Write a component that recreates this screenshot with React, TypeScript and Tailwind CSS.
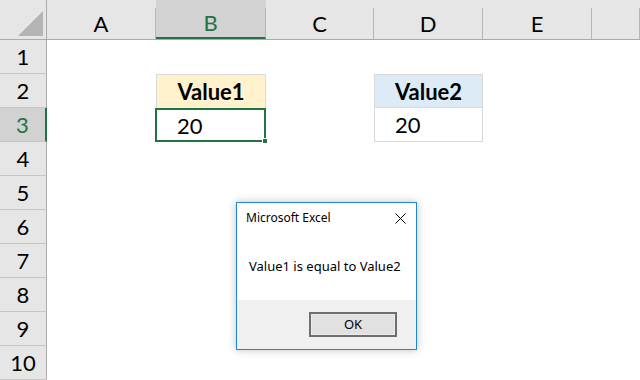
import { Fragment } from 'react';

const COLS = ['A', 'B', 'C', 'D', 'E', ''];
const ROWS = [1, 2, 3, 4, 5, 6, 7, 8, 9, 10];

function ColHeader({ label, selected }: { label: string; selected?: boolean }) {
  return (
    <div className={`flex pt-2 ${selected ? 'bg-[#d2d2d2]' : 'bg-[#e6e6e6]'} border-b border-[#ababab]`}>
      <div
        className={`flex h-full w-full items-center justify-center border-r border-[#b6b6b6] text-[22px] ${
          selected ? 'text-[#217346] border-b-2 border-b-[#217346]' : 'text-black'
        }`}
      >
        {label}
      </div>
    </div>
  );
}

function RowHeader({ n, selected }: { n: number; selected?: boolean }) {
  return (
    <div
      className={`flex items-center justify-center border-b border-[#c6c6c6] text-[22px] ${
        selected
          ? 'bg-[#d2d2d2] text-[#217346] border-r-2 border-r-[#217346]'
          : 'bg-[#e6e6e6] text-black border-r border-r-[#ababab]'
      }`}
    >
      {n}
    </div>
  );
}

function Cell({ row, col }: { row: number; col: number }) {
  if (row === 2 && col === 1) {
    return (
      <div className="flex items-center justify-center border border-[#d9d9d9] border-b-0 bg-[#fff2cc] text-[22px] font-bold">
        Value1
      </div>
    );
  }
  if (row === 3 && col === 1) {
    return (
      <div className="relative -ml-px flex items-center border-2 border-[#217346] pl-5 text-[22px]">
        20
        <div className="absolute -right-[4px] -bottom-[4px] h-[6px] w-[6px] border border-white bg-[#217346]" />
      </div>
    );
  }
  if (row === 2 && col === 3) {
    return (
      <div className="flex items-center justify-center border border-[#d9d9d9] bg-[#ddebf7] text-[22px] font-bold">
        Value2
      </div>
    );
  }
  if (row === 3 && col === 3) {
    return (
      <div className="flex items-center border border-t-0 border-[#d9d9d9] pl-5 text-[22px]">
        20
      </div>
    );
  }
  return <div />;
}

function MsgBox() {
  return (
    <div className="absolute left-[236px] top-[202px] flex h-[148px] w-[181px] flex-col border border-[#1c87d8] bg-white font-['Noto_Sans',sans-serif] text-black shadow-[0_0_8px_rgba(0,0,0,0.25)]">
      <div className="flex h-[30px] items-center justify-between pl-[9px] pr-[10px] text-[12px]">
        <span>Microsoft Excel</span>
        <svg width="11" height="11" viewBox="0 0 11 11" className="mt-[1px]">
          <path d="M0.5 0.5 L10.5 10.5 M10.5 0.5 L0.5 10.5" stroke="#000" strokeWidth="1" />
        </svg>
      </div>
      <div className="flex h-[67px] items-center pl-[12px] text-[13px]">Value1 is equal to Value2</div>
      <div className="flex flex-1 justify-end bg-[#f0f0f0] pr-[19px] pt-[12px]">
        <div className="flex h-[25px] w-[88px] items-center justify-center border-2 border-[#6e6e6e] bg-[#e1e1e1] text-[13px] outline outline-1 -outline-offset-3 outline-[#ececec]">
          OK
        </div>
      </div>
    </div>
  );
}

export default function App() {
  return (
    <div className="relative h-[380px] w-[640px] overflow-hidden bg-white font-['Lato',sans-serif] text-black">
      <div className="grid grid-cols-[47px_109px_110px_108px_109px_109px_48px] grid-rows-[40px_repeat(10,34px)]">
        {/* corner */}
        <div className="flex items-end justify-end border-b border-r border-[#ababab] bg-[#e6e6e6] pb-[3px] pr-[3px]">
          <svg width="25" height="25" viewBox="0 0 25 25">
            <polygon points="25,0 25,25 0,25" fill="#b4b4b4" />
          </svg>
        </div>
        {COLS.map((c, i) => (
          <ColHeader key={i} label={c} selected={c === 'B'} />
        ))}
        {ROWS.map((r) => (
          <Fragment key={r}>
            <RowHeader n={r} selected={r === 3} />
            {COLS.map((_, ci) => (
              <Cell key={ci} row={r} col={ci} />
            ))}
          </Fragment>
        ))}
      </div>
      <MsgBox />
    </div>
  );
}
